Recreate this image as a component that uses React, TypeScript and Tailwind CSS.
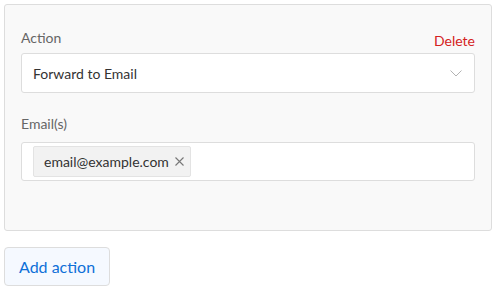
export default function App() {
  return (
    <div className="min-h-screen bg-white p-1 font-['Lato','Noto_Sans',sans-serif] text-[14px]">
      <div className="h-[227px] rounded-[3px] border border-[#dddddd] bg-[#f9f9f9] px-4 pt-[23px]">
        <div className="flex h-[20px] items-start justify-between">
          <span className="text-[14px] leading-[20px] text-[#666666]">Action</span>
          <button className="mt-[3px] text-[14px] leading-[20px] text-[#d42222]">Delete</button>
        </div>
        <div className="mt-[5px] flex h-[40px] items-center justify-between rounded-[3px] border border-[#dddddd] bg-white pl-[11px] pr-[12px] text-[#333333]">
          <span>Forward to Email</span>
          <svg width="12" height="7" viewBox="0 0 12 7" fill="none">
            <path d="M0.5 0.5L6 6L11.5 0.5" stroke="#b3b3b3" strokeWidth="1" />
          </svg>
        </div>

        <div className="mt-[21px] text-[14px] leading-[20px] text-[#666666]">Email(s)</div>
        <div className="mt-[8px] flex h-[39px] items-center rounded-[3px] border border-[#dddddd] bg-white px-[11px]">
          <span className="flex h-[31px] items-center gap-[6px] rounded-[2px] border border-[#e3e3e3] bg-[#f2f2f2] pl-[10px] pr-[6px] text-[#333333]">
            email@example.com
            <svg width="9" height="9" viewBox="0 0 9 9" fill="none">
              <path d="M0.5 0.5L8.5 8.5M8.5 0.5L0.5 8.5" stroke="#777777" strokeWidth="1.1" />
            </svg>
          </span>
        </div>
      </div>

      <button className="mt-[16px] h-[39px] rounded-[4px] border border-[#dddddd] bg-[#f5f9ff] px-[14px] text-[16px] text-[#0e70d8]">
        Add action
      </button>
    </div>
  );
}
